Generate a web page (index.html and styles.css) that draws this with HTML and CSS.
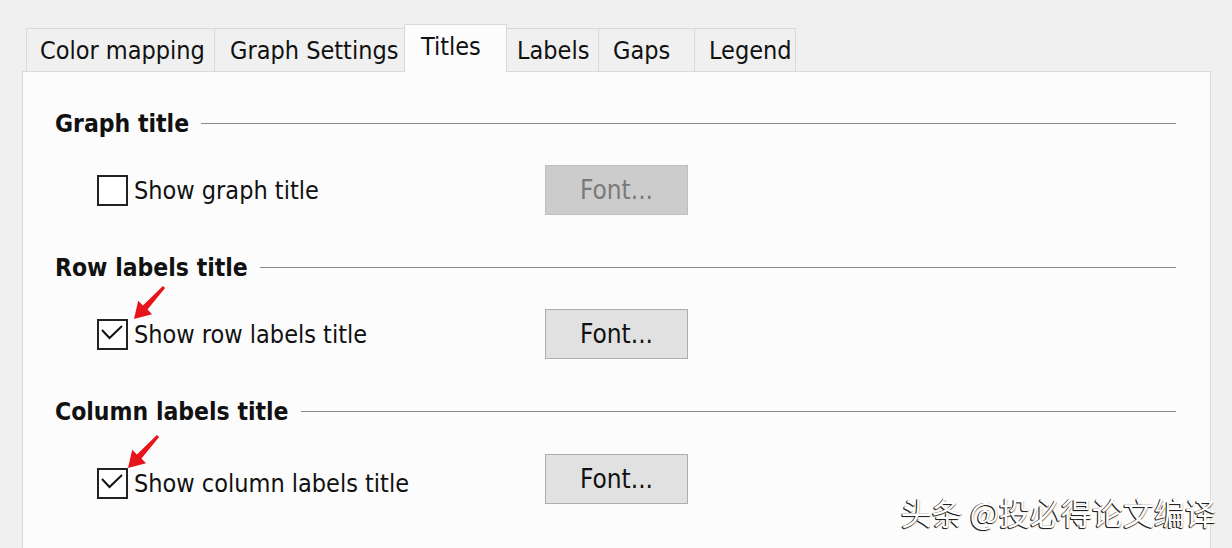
FILE: index.html
```html
<!DOCTYPE html>
<html lang="en">
<head>
    <meta charset="UTF-8">
    <title>Titles</title>
    <link rel="stylesheet" href="styles.css">
</head>
<body>
<div class="tabs">
    <div class="tab tab-color">Color mapping</div>
    <div class="tab tab-graph">Graph Settings</div>
    <div class="tab tab-titles active">Titles</div>
    <div class="tab tab-labels">Labels</div>
    <div class="tab tab-gaps">Gaps</div>
    <div class="tab tab-legend">Legend</div>
</div>

<div class="panel">
    <!-- Graph title -->
    <div class="group">
        <div class="group-title"><span>Graph title</span></div>
        <div class="option">
            <label class="check-label">
                <span class="checkbox"></span>
                Show graph title
            </label>
            <button class="font-button" disabled>Font...</button>
        </div>
    </div>

    <!-- Row labels title -->
    <div class="group">
        <div class="group-title"><span>Row labels title</span></div>
        <div class="option">
            <label class="check-label">
                <span class="checkbox checked">
                    <svg width="31" height="31" viewBox="0 0 31 31"><polyline points="5,11 12.5,19 25,7" fill="none" stroke="#111" stroke-width="2"/></svg>
                    <svg class="arrow" width="36" height="36" viewBox="0 0 36 36"><polygon points="2,34 20,29.2 15.5,24.6 33.1,3 30.9,1 10.9,20.4 6.2,15.8" fill="#e8141b"/></svg>
                </span>
                Show row labels title
            </label>
            <button class="font-button">Font...</button>
        </div>
    </div>

    <!-- Column labels title -->
    <div class="group">
        <div class="group-title"><span>Column labels title</span></div>
        <div class="option option-last">
            <label class="check-label">
                <span class="checkbox checked">
                    <svg width="31" height="31" viewBox="0 0 31 31"><polyline points="5,11 12.5,19 25,7" fill="none" stroke="#111" stroke-width="2"/></svg>
                    <svg class="arrow arrow-low" width="36" height="36" viewBox="0 0 36 36"><polygon points="2,34 20,29.2 15.5,24.6 33.1,3 30.9,1 10.9,20.4 6.2,15.8" fill="#e8141b"/></svg>
                </span>
                Show column labels title
            </label>
            <button class="font-button">Font...</button>
        </div>
    </div>
</div>

<div class="watermark">头条 @投必得论文编译</div>
</body>
</html>
```

FILE: styles.css
```css
body {
    margin: 0;
    padding: 0;
    background: #f0f0f0;
    font-family: "DejaVu Sans Condensed", "DejaVu Sans", sans-serif;
    font-stretch: condensed;
    color: #111;
    height: 548px;
    overflow: hidden;
    position: relative;
}

/* Tab strip */
.tabs {
    display: flex;
    align-items: flex-end;
    padding: 24px 0 0 26px;
    height: 71px;
    box-sizing: border-box;
    position: relative;
    z-index: 1;
}

.tab {
    height: 43px;
    box-sizing: border-box;
    padding-left: 13px;
    border: 1px solid #d9d9d9;
    border-bottom: none;
    border-right: none;
    background: #f0f0f0;
    font-size: 25px;
    line-height: 44px;
    white-space: nowrap;
}

.tab-color { width: 188px; }
.tab-graph { width: 190px; padding-left: 15px; }
.tab-labels { width: 91px; padding-left: 10px; }
.tab-gaps { width: 96px; padding-left: 14px; }
.tab-legend { width: 102px; padding-left: 14px; border-right: 1px solid #d9d9d9; }

.tab.active {
    width: 103px;
    height: 48px;
    background: #fcfcfc;
    border: 1px solid #d9d9d9;
    border-bottom: none;
    border-radius: 2px 2px 0 0;
    margin-bottom: -1px;
    line-height: 44px;
    padding-left: 16px;
}

.tab.active + .tab {
    border-left: none;
}

/* Panel */
.panel {
    margin-left: 22px;
    width: 1189px;
    height: 477px;
    box-sizing: border-box;
    border: 1px solid #d9d9d9;
    border-bottom: none;
    background: #fcfcfc;
    padding: 36px 34px 0 32px;
}

.group-title {
    display: flex;
    align-items: center;
    gap: 12px;
    height: 30px;
    font-weight: bold;
    font-size: 24.5px;
}

.group-title::after {
    content: "";
    flex: 1;
    height: 1px;
    background: #8a8a8a;
}

.option {
    display: flex;
    align-items: center;
    height: 50px;
    margin: 27px 0 37px 42px;
}

.option-last {
    margin: 28px 0 0 42px;
}

.option-last .check-label {
    padding-top: 9px;
}

.check-label {
    display: flex;
    align-items: center;
    gap: 6px;
    width: 448px;
    font-size: 25px;
}

.checkbox {
    position: relative;
    width: 31px;
    height: 31px;
    box-sizing: border-box;
    border: 2px solid #222;
    background: #fff;
}

.checkbox svg {
    position: absolute;
    left: -2px;
    top: -2px;
}

.checkbox .arrow {
    left: 33px;
    top: -36px;
}

.checkbox .arrow-low {
    left: 27px;
    top: -36px;
}

.font-button {
    width: 143px;
    height: 50px;
    border: 1px solid #adadad;
    background: #e1e1e1;
    font-family: inherit;
    font-stretch: condensed;
    font-size: 26px;
    color: #111;
    padding: 0 0 0 -2px;
}

.font-button:disabled {
    background: #cccccc;
    border-color: #bfbfbf;
    color: #7a7a7a;
}

.watermark {
    position: absolute;
    right: 16px;
    bottom: 14px;
    font-family: "Noto Sans CJK SC", sans-serif;
    font-size: 31px;
    color: #fff;
    text-shadow: -1px 1px 0 #222, -1px 0 0 #444, 0 1px 1px #555;
}
```
